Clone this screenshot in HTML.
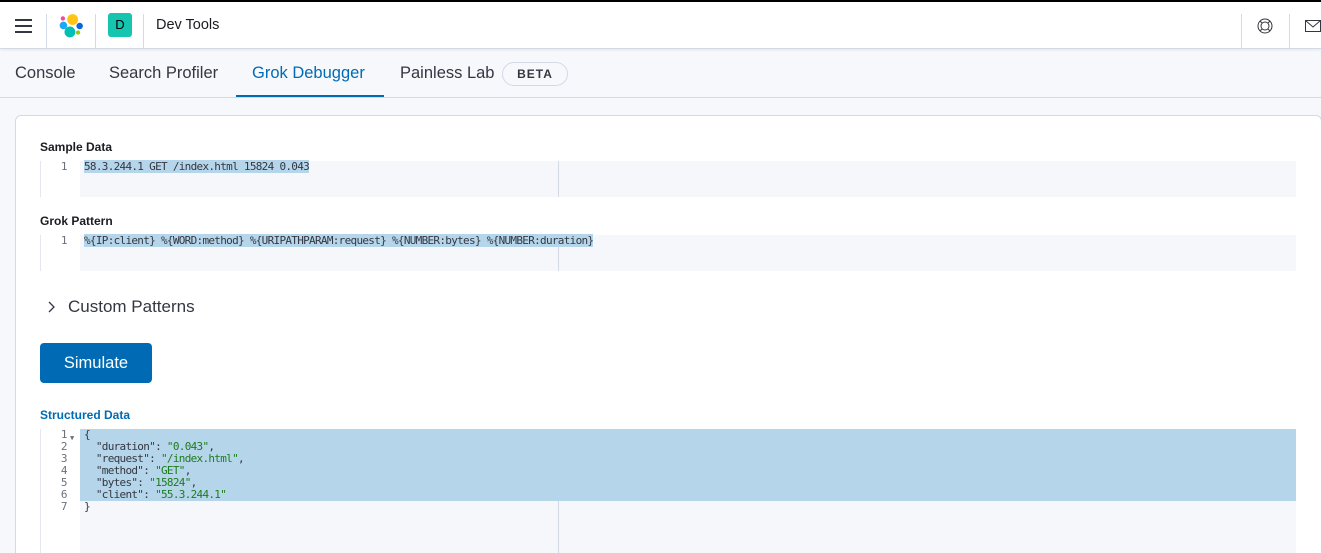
<!DOCTYPE html>
<html><head><style>
*{margin:0;padding:0;box-sizing:border-box}
html,body{width:1321px;height:553px;overflow:hidden}
body{background:#f7f8fc;font-family:"Liberation Sans",sans-serif;color:#343741;position:relative}
.hdr{position:absolute;left:0;top:0;width:1321px;height:49px;background:#fff;border-top:2px solid #000;border-bottom:1px solid #d3dae6;box-shadow:0 1px 3px rgba(0,0,0,.08)}
.sep{position:absolute;top:14px;width:1px;height:34px;background:#d3dae6}
.tabs{position:absolute;top:49px;left:0;width:1321px;height:49px;border-bottom:1px solid #d3dae6}
.tab{position:absolute;top:15px;font-size:16.5px;color:#343741}
.panel{position:absolute;left:15px;top:115px;width:1307px;height:450px;background:#fff;border:1px solid #d3dae6;border-radius:6px}
.lbl{position:absolute;left:40px;font-size:12px;font-weight:bold;color:#1a1c21}
.ed{position:absolute;left:40px;width:1256px;background:#f5f7fa;font-family:"DejaVu Sans Mono",monospace;font-size:11px;line-height:12px}
.gut{position:absolute;left:0;top:0;bottom:0;width:40px;background:#fff;border-left:1px solid #e4e7ee;color:#69707d;text-align:right;padding-right:13px;letter-spacing:-0.5px}
.pm{position:absolute;left:518px;top:0;bottom:0;width:1px;background:#d3dae6}
.sel{background:#b5d5ea}
.code{position:absolute;left:44px;top:0;color:#343741;white-space:pre;letter-spacing:-0.7px}
.s{color:#1c7c1c}
</style></head><body>
<div class="hdr">
 <div style="position:absolute;left:15px;top:17px;width:17px;height:2px;background:#343741;box-shadow:0 6px 0 #343741,0 12px 0 #343741"></div>
 <div class="sep" style="left:46px;top:12px"></div>
 <svg style="position:absolute;left:58px;top:11px" width="26" height="26" viewBox="0 0 24 24"><circle cx="4.5" cy="5" r="2" fill="#f04e98"/><circle cx="13.5" cy="6" r="5" fill="#fec514"/><circle cx="20" cy="12" r="3" fill="#0b64dd"/><circle cx="5" cy="11.5" r="3.5" fill="#1ba9f5"/><circle cx="11" cy="17.5" r="5" fill="#00bfb3"/><circle cx="18.5" cy="18" r="2" fill="#93c90e"/></svg>
 <div class="sep" style="left:95px;top:12px"></div>
 <div style="position:absolute;left:108px;top:11px;width:24px;height:24px;background:#16c5b0;border-radius:3px;font-size:13px;text-align:center;line-height:24px;color:#000">D</div>
 <div class="sep" style="left:143px;top:12px"></div>
 <div style="position:absolute;left:156px;top:15px;font-size:14.5px;color:#1a1c21">Dev Tools</div>
 <div class="sep" style="left:1241px;top:12px"></div>
 <svg style="position:absolute;left:1257px;top:16px" width="16" height="16" viewBox="0 0 16 16" fill="none" stroke="#343741"><circle cx="8" cy="8" r="7"/><circle cx="8" cy="8" r="4"/><path d="M3 3l2 2M13 3l-2 2M3 13l2-2M13 13l-2-2"/></svg>
 <div class="sep" style="left:1289px;top:12px"></div>
 <svg style="position:absolute;left:1305px;top:18px" width="16" height="12" viewBox="0 0 16 12" fill="none" stroke="#343741"><rect x=".5" y=".5" width="15" height="11"/><path d="M.5 .5L8 7l7.5-6.5"/></svg>
</div>
<div class="tabs">
 <div class="tab" style="left:15px">Console</div>
 <div class="tab" style="left:109px">Search Profiler</div>
 <div class="tab" style="left:252px;color:#006bb4">Grok Debugger</div>
 <div style="position:absolute;left:236px;top:46px;width:148px;height:2px;background:#006bb4"></div>
 <div class="tab" style="left:400px">Painless Lab</div>
 <div style="position:absolute;left:502px;top:13px;width:66px;height:24px;border:1px solid #d3dae6;border-radius:12px;font-size:12px;font-weight:bold;text-align:center;line-height:22px;letter-spacing:1px;color:#343741">BETA</div>
</div>
<div class="panel"></div>
<div class="lbl" style="top:140px">Sample Data</div>
<div class="ed" style="top:161px;height:36px"><div class="gut">1</div><div class="pm"></div><div class="code"><span class="sel">58.3.244.1 GET /index.html 15824 0.043</span></div></div>
<div class="lbl" style="top:214px">Grok Pattern</div>
<div class="ed" style="top:235px;height:36px"><div class="gut">1</div><div class="pm"></div><div class="code"><span class="sel">%{IP:client} %{WORD:method} %{URIPATHPARAM:request} %{NUMBER:bytes} %{NUMBER:duration}</span></div></div>
<svg style="position:absolute;left:47px;top:301px" width="8" height="12" viewBox="0 0 8 12"><path d="M2 1l5 5-5 5" fill="none" stroke="#343741" stroke-width="1.3"/></svg>
<div style="position:absolute;left:68px;top:297px;font-size:17px;color:#343741">Custom Patterns</div>
<div style="position:absolute;left:40px;top:343px;width:112px;height:40px;background:#006bb4;border-radius:4px;color:#fff;font-size:16.5px;text-align:center;line-height:40px">Simulate</div>
<div class="lbl" style="top:408px;color:#006bb4">Structured Data</div>
<div class="ed" style="top:429px;height:130px"><div class="gut" style="padding-right:13px">1<br>2<br>3<br>4<br>5<br>6<br>7</div><div style="position:absolute;left:30px;top:3px;font-size:7px;color:#69707d">&#9660;</div><div class="pm"></div>
<div style="position:absolute;left:40px;top:0;width:1216px;height:72px;background:#b5d5ea"></div>
<div class="code">{
  "duration": <span class="s">"0.043"</span>,
  "request": <span class="s">"/index.html"</span>,
  "method": <span class="s">"GET"</span>,
  "bytes": <span class="s">"15824"</span>,
  "client": <span class="s">"55.3.244.1"</span>
}</div></div>
</body></html>
